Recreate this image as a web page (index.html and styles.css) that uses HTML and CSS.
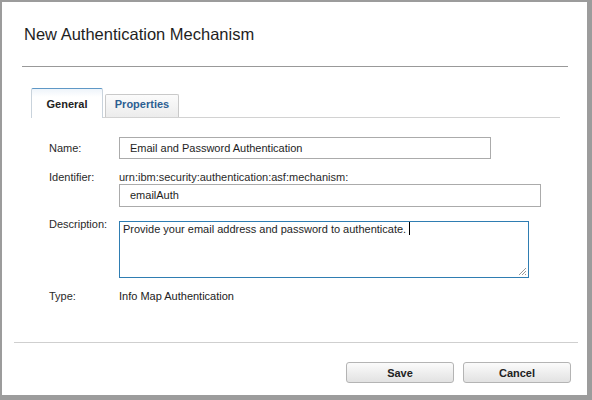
FILE: index.html
```html
<!DOCTYPE html>
<html>
<head>
<meta charset="utf-8">
<link rel="stylesheet" href="styles.css">
</head>
<body>
<div class="dialog">
  <h1 class="title">New Authentication Mechanism</h1>
  <div class="rule"></div>
  <div class="tabs">
    <div class="tab tab-active">General</div>
    <div class="tab tab-inactive">Properties</div>
  </div>
  <div class="form">
    <div class="row row-name">
      <span class="label">Name:</span>
      <div class="input input-name">Email and Password Authentication</div>
    </div>
    <div class="row row-id">
      <span class="label">Identifier:</span>
      <div class="field">
        <div class="prefix">urn:ibm:security:authentication:asf:mechanism:</div>
        <div class="input input-id">emailAuth</div>
      </div>
    </div>
    <div class="row row-desc">
      <span class="label label-top">Description:</span>
      <div class="textarea">Provide your email address and password to authenticate. <span class="caret"></span>
        <svg class="grip" width="9" height="9" viewBox="0 0 9 9"><path d="M8 1L1 8M8 4L4 8M8 7L7 8" stroke="#9a9a9a" stroke-width="1"/></svg>
      </div>
    </div>
    <div class="row row-type">
      <span class="label">Type:</span>
      <span class="value">Info Map Authentication</span>
    </div>
  </div>
  <div class="footer">
    <div class="rule-light"></div>
    <div class="buttons">
      <button class="btn">Save</button>
      <button class="btn">Cancel</button>
    </div>
  </div>
</div>
</body>
</html>
```
FILE: styles.css
```css
html, body {
  margin: 0;
  padding: 0;
  background: #9c9c9c;
}
body {
  width: 592px;
  height: 400px;
  overflow: hidden;
  font-family: "Liberation Sans", Arial, sans-serif;
  color: #222;
}
.dialog {
  margin: 2px 0 0 2px;
  width: 585px;
  height: 393px;
  background: #fff;
  box-sizing: border-box;
  padding-top: 22px;
}
.title {
  margin: 0 0 0 22px;
  font-size: 16.5px;
  font-weight: normal;
  line-height: 20px;
  color: #1e1e1e;
}
.rule {
  margin: 22px 19px 0 20px;
  height: 1px;
  background: #999;
}
.tabs {
  margin: 21px 27px 0 29px;
  display: flex;
  align-items: flex-end;
  gap: 2px;
  border-bottom: 1px solid #d2d2d2;
  height: 29px;
}
.tab {
  font-size: 11px;
  font-weight: bold;
  line-height: 13px;
  box-sizing: border-box;
  display: flex;
  justify-content: center;
  align-items: center;
  border: 1px solid #c9c9c9;
  border-bottom: none;
  border-radius: 2px 2px 0 0;
}
.tab-active {
  width: 72px;
  height: 30px;
  margin-bottom: -1px;
  padding-top: 1px;
  background: linear-gradient(#eef4fa, #fff 8px);
  border-color: #c9d3dc;
  border-top-color: #5f98c6;
  color: #222;
}
.tab-inactive {
  width: 74px;
  height: 23px;
  padding-bottom: 4px;
  background: linear-gradient(#fbfbfb, #ececec);
  color: #2d5f92;
}
.form {
  margin: 19px 0 0 47px;
  font-size: 11px;
  line-height: 13px;
}
.row {
  display: flex;
}
.label {
  width: 70px;
  flex: none;
  color: #2a2a2a;
}
.row-name {
  align-items: center;
}
.input {
  box-sizing: border-box;
  height: 22px;
  border: 1px solid #ababab;
  padding: 0 10px;
  display: flex;
  align-items: center;
  color: #1e1e1e;
}
.input-name { width: 372px; }
.input-id { width: 422px; height: 23px; }
.row-id { margin-top: 12px; }
.field { display: flex; flex-direction: column; }
.prefix { color: #2a2a2a; }
.row-desc { margin-top: 14px; }
.label-top { margin-top: -3px; }
.textarea {
  position: relative;
  box-sizing: border-box;
  width: 410px;
  height: 57px;
  border: 1px solid #2f7db2;
  padding: 0 3px;
  color: #1e1e1e;
}
.caret {
  display: inline-block;
  width: 1px;
  height: 13px;
  background: #000;
  vertical-align: -2px;
}
.grip {
  position: absolute;
  right: 1px;
  bottom: 1px;
}
.row-type { margin-top: 12px; }
.value { color: #222; }
.footer {
  margin-top: 39px;
}
.rule-light {
  margin: 0 9px 0 12px;
  height: 1px;
  background: #cfcfcf;
}
.buttons {
  margin: 19px 16px 0 0;
  display: flex;
  justify-content: flex-end;
  gap: 9px;
}
.btn {
  width: 108px;
  height: 21px;
  box-sizing: border-box;
  border: 1px solid #b4b4b4;
  border-radius: 3px;
  background: linear-gradient(#fbfbfb, #e2e2e2);
  font-family: "Liberation Sans", Arial, sans-serif;
  font-size: 11px;
  font-weight: bold;
  color: #222;
  padding: 0;
}
```
